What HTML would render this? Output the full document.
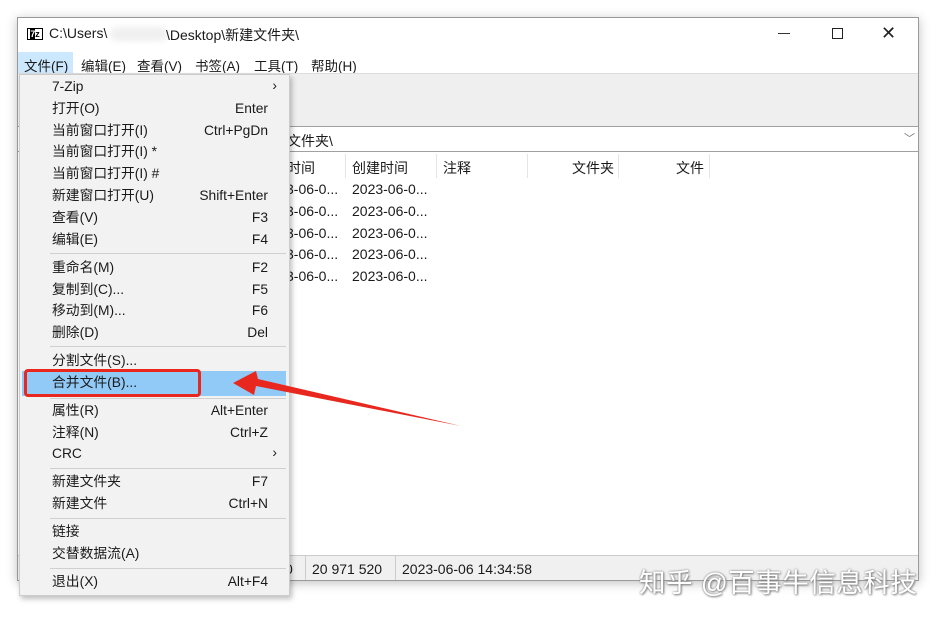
<!DOCTYPE html>
<html><head><meta charset="utf-8"><style>
*{margin:0;padding:0;box-sizing:border-box}
body{width:945px;height:619px;background:#fff;position:relative;overflow:hidden;font-family:"Liberation Sans","Noto Sans CJK SC",sans-serif;font-size:14px;color:#1a1a1a}
.a{position:absolute;white-space:nowrap}
.win{position:absolute;left:17px;top:17px;width:902px;height:564px;border:1px solid #9a9a9a;background:#fff;box-shadow:0 2px 10px rgba(0,0,0,.25)}
.mi{position:absolute;left:52px;line-height:16px;transform:translateY(-8px)}
.sc{position:absolute;left:0;line-height:16px;transform:translateY(-8px);width:268px;text-align:right}
.sep{position:absolute;left:50px;width:236px;height:1px;background:#d0d0d0}
.mb{position:absolute;top:55px;font-size:13.5px}
</style></head><body>
<div class="win"></div>
<div class="a" style="left:27px;top:28px;width:16px;height:12px;border:1px solid #000;background:#fff;font-size:9px;font-weight:bold;line-height:10px;text-align:center;color:#000"><span style="background:#000;color:#fff">7</span>z</div>
<div class="a" style="left:49px;top:25px;font-size:14px">C:\Users\</div>
<div class="a" style="left:110px;top:27px;width:58px;height:14px;background:#f0f0f0;border-radius:7px;filter:blur(3px)"></div>
<div class="a" style="left:166px;top:25px;font-size:14px">\Desktop\新建文件夹\</div>
<div class="a" style="left:778px;top:33px;width:12px;height:1px;background:#333"></div>
<div class="a" style="left:832px;top:28px;width:11px;height:11px;border:1px solid #222"></div>
<div class="a" style="left:881px;top:22px;font-size:18px;line-height:22px;color:#222">✕</div>
<div class="a" style="left:18px;top:52px;width:55px;height:21px;background:#cce8ff"></div>
<div class="mb" style="left:24px">文件(F)</div>
<div class="mb" style="left:81px">编辑(E)</div>
<div class="mb" style="left:137px">查看(V)</div>
<div class="mb" style="left:195px">书签(A)</div>
<div class="mb" style="left:254px">工具(T)</div>
<div class="mb" style="left:311px">帮助(H)</div>
<div class="a" style="left:18px;top:73px;width:900px;height:1px;background:#ddd"></div>
<div class="a" style="left:18px;top:74px;width:900px;height:52px;background:#efefef"></div>
<div class="a" style="left:18px;top:126px;width:900px;height:1px;background:#a0a0a0"></div>
<div class="a" style="left:287px;top:131px">文件夹\</div>
<div class="a" style="left:904px;top:130px;color:#777;font-size:11px">﹀</div>
<div class="a" style="left:18px;top:151px;width:900px;height:1px;background:#a0a0a0"></div>
<div class="a" style="left:287px;top:158px">时间</div>
<div class="a" style="left:345px;top:154px;width:1px;height:24px;background:#e5e5e5"></div>
<div class="a" style="left:352px;top:158px">创建时间</div>
<div class="a" style="left:436px;top:154px;width:1px;height:24px;background:#e5e5e5"></div>
<div class="a" style="left:443px;top:158px">注释</div>
<div class="a" style="left:527px;top:154px;width:1px;height:24px;background:#e5e5e5"></div>
<div class="a" style="left:572px;top:158px">文件夹</div>
<div class="a" style="left:618px;top:154px;width:1px;height:24px;background:#e5e5e5"></div>
<div class="a" style="left:676px;top:158px">文件</div>
<div class="a" style="left:709px;top:154px;width:1px;height:24px;background:#e5e5e5"></div>
<div class="a" style="left:286px;top:179px;line-height:21.8px">3-06-0...<br>3-06-0...<br>3-06-0...<br>3-06-0...<br>3-06-0...</div>
<div class="a" style="left:352px;top:179px;line-height:21.8px">2023-06-0...<br>2023-06-0...<br>2023-06-0...<br>2023-06-0...<br>2023-06-0...</div>
<div class="a" style="left:18px;top:555px;width:900px;height:25px;background:#f0f0f0;border-top:1px solid #ccc"></div>
<div class="a" style="left:285px;top:561px">0</div>
<div class="a" style="left:305px;top:556px;width:1px;height:24px;background:#ccc"></div>
<div class="a" style="left:312px;top:561px">20 971 520</div>
<div class="a" style="left:395px;top:556px;width:1px;height:24px;background:#ccc"></div>
<div class="a" style="left:402px;top:561px">2023-06-06 14:34:58</div>
<div class="a" style="left:19px;top:74px;width:271px;height:522px;background:#f2f2f2;border:1px solid #ccc;box-shadow:2px 3px 5px rgba(0,0,0,.25)"></div>
<div class="a" style="left:22px;top:371px;width:264px;height:25px;background:#91c9f7"></div>
<div class="a" style="left:24px;top:369px;width:177px;height:28px;border:3px solid #e8281e;border-radius:4px"></div>
<div class="a" style="left:0;top:0;width:290px;height:619px;font-size:13.8px">
<div class="mi" style="top:87px">7-Zip</div><div class="sc" style="top:86px;width:277px">›</div>
<div class="mi" style="top:109px">打开(O)</div><div class="sc" style="top:109px">Enter</div>
<div class="mi" style="top:131px">当前窗口打开(I)</div><div class="sc" style="top:131px">Ctrl+PgDn</div>
<div class="mi" style="top:152px">当前窗口打开(I) *</div>
<div class="mi" style="top:174px">当前窗口打开(I) #</div>
<div class="mi" style="top:196px">新建窗口打开(U)</div><div class="sc" style="top:196px">Shift+Enter</div>
<div class="mi" style="top:218px">查看(V)</div><div class="sc" style="top:218px">F3</div>
<div class="mi" style="top:240px">编辑(E)</div><div class="sc" style="top:240px">F4</div>
<div class="sep" style="top:253px"></div>
<div class="mi" style="top:268px">重命名(M)</div><div class="sc" style="top:268px">F2</div>
<div class="mi" style="top:290px">复制到(C)...</div><div class="sc" style="top:290px">F5</div>
<div class="mi" style="top:311px">移动到(M)...</div><div class="sc" style="top:311px">F6</div>
<div class="mi" style="top:333px">删除(D)</div><div class="sc" style="top:333px">Del</div>
<div class="sep" style="top:346px"></div>
<div class="mi" style="top:361px">分割文件(S)...</div>
<div class="mi" style="top:383px">合并文件(B)...</div>
<div class="sep" style="top:398px"></div>
<div class="mi" style="top:411px">属性(R)</div><div class="sc" style="top:411px">Alt+Enter</div>
<div class="mi" style="top:433px">注释(N)</div><div class="sc" style="top:433px">Ctrl+Z</div>
<div class="mi" style="top:454px">CRC</div><div class="sc" style="top:453px;width:277px">›</div>
<div class="sep" style="top:468px"></div>
<div class="mi" style="top:482px">新建文件夹</div><div class="sc" style="top:482px">F7</div>
<div class="mi" style="top:504px">新建文件</div><div class="sc" style="top:504px">Ctrl+N</div>
<div class="sep" style="top:518px"></div>
<div class="mi" style="top:532px">链接</div>
<div class="mi" style="top:554px">交替数据流(A)</div>
<div class="sep" style="top:568px"></div>
<div class="mi" style="top:582px">退出(X)</div><div class="sc" style="top:582px">Alt+F4</div>
</div>
<svg class="a" style="left:0;top:0" width="945" height="619"><polygon points="233,383 256,371 258,379 461,426 256,386 254,395" fill="#e8281e"/></svg>
<div class="a" style="left:639px;top:561px;font-size:26.5px;letter-spacing:0.5px;color:#fff;text-shadow:0 0 2px #777,1px 1px 2px #888">知乎 @百事牛信息科技</div>
</body></html>
